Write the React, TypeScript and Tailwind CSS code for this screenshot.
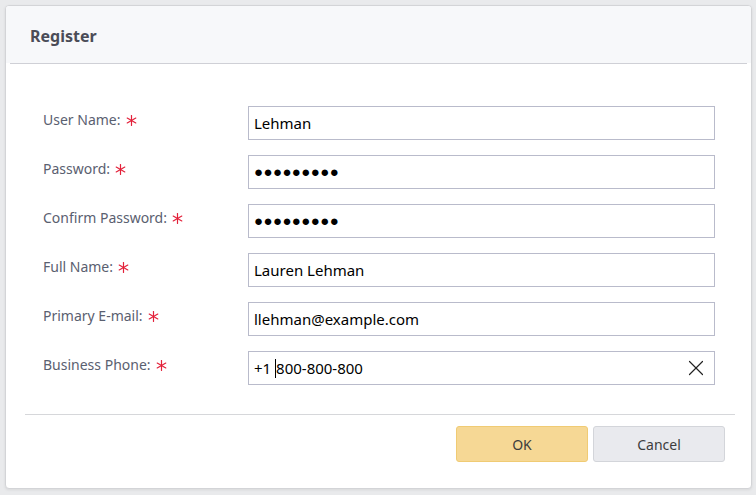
import { X } from "lucide-react";

const FIELDS = [
  { label: "User Name:", value: "Lehman" },
  { label: "Password:", value: "●●●●●●●●●", secret: true },
  { label: "Confirm Password:", value: "●●●●●●●●●", secret: true },
  { label: "Full Name:", value: "Lauren Lehman" },
  { label: "Primary E-mail:", value: "llehman@example.com" },
  { label: "Business Phone:", value: "800-800-800", phone: true },
];

function Required() {
  return (
    <svg viewBox="0 0 10 10" className="ml-[5px] h-[11px] w-[11px] shrink-0" stroke="#e3213a" strokeWidth="1.1" strokeLinecap="round">
      <line x1="5" y1="0.5" x2="5" y2="9.5" />
      <line x1="1.1" y1="2.75" x2="8.9" y2="7.25" />
      <line x1="1.1" y1="7.25" x2="8.9" y2="2.75" />
    </svg>
  );
}

export default function App() {
  return (
    <div className="h-[495px] w-[756px] bg-[#e9eaec] pl-[5px] pt-[5px]" style={{ fontFamily: '"Noto Sans", "Open Sans", sans-serif' }}>
      <div className="flex h-[484px] w-[747px] flex-col overflow-hidden rounded-[4px] border border-[#d3d4d7] bg-white shadow-[0_1px_3px_rgba(0,0,0,0.08)]">
        <div className="flex h-[57px] items-center bg-[#f7f8fa] pl-[24px] pt-[2px]">
          <span className="text-[16px] font-bold text-[#4a4c57]">Register</span>
        </div>
        <div className="mx-[4px] h-px bg-[#cfd0d6]" />

        <div className="flex flex-col gap-[15px] pl-[37px] pt-[42px]">
          {FIELDS.map((f) => (
            <div key={f.label} className="grid grid-cols-[205px_467px]">
              <div className="flex items-center self-start pt-[4px] text-[14px] leading-[20px] text-[#5a6070]">
                {f.label}
                <Required />
              </div>
              <div className="flex h-[34px] items-center border border-[#b9bbcb] bg-white pl-[5px] pr-[5px] text-[15px] text-black">
                {f.phone ? (
                  <>
                    <span>+1&nbsp;</span>
                    <span className="h-[19px] w-px bg-black" />
                    <span>{f.value}</span>
                    <X className="ml-auto h-[26px] w-[26px] text-[#222]" strokeWidth={1.1} />
                  </>
                ) : f.secret ? (
                  <span className="text-[15px] tracking-[0.4px]" style={{ fontFamily: '"Liberation Sans", Arial, sans-serif' }}>
                    {f.value}
                  </span>
                ) : (
                  <span>{f.value}</span>
                )}
              </div>
            </div>
          ))}
        </div>

        <div className="ml-[19px] mt-[29px] h-px w-[710px] bg-[#d6d7da]" />

        <div className="mr-[26px] mt-[11px] flex justify-end gap-[5px]">
          <button className="h-[36px] w-[132px] rounded-[3px] border border-[#f0cb74] bg-[#f6d895] text-[14px] text-[#3d3d3d]">
            OK
          </button>
          <button className="h-[36px] w-[132px] rounded-[3px] border border-[#d3d5da] bg-[#e9eaee] text-[14px] text-[#3d3d3d]">
            Cancel
          </button>
        </div>
      </div>
    </div>
  );
}
